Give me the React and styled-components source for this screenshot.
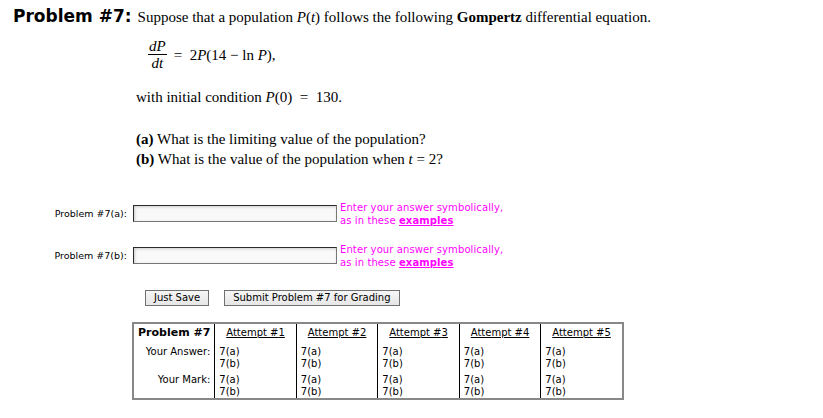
import styled, { createGlobalStyle } from "styled-components";

const GlobalStyle = createGlobalStyle`
  body {
    margin: 0;
    background: #ffffff;
    color: #000000;
    font-family: "Liberation Serif", "Times New Roman", serif;
  }
`;

const Page = styled.div`
  width: 823px;
  height: 418px;
  padding: 6px 0 0 13px;
  box-sizing: border-box;
  overflow: hidden;
`;

const HeaderRow = styled.div`
  display: flex;
  align-items: baseline;
  gap: 6px;
`;

const Heading = styled.span`
  font-family: "DejaVu Sans", Verdana, sans-serif;
  font-weight: bold;
  font-size: 17px;
  white-space: nowrap;
`;

const Body = styled.div`
  font-size: 15px;
  line-height: 18px;
`;

const Statement = styled.div`
  padding-left: 123px;
`;

const Equation = styled.div`
  display: flex;
  align-items: center;
  gap: 7px;
  margin: 13px 0 0 12px;
  font-size: 15px;
`;

const Fraction = styled.span`
  display: inline-flex;
  flex-direction: column;
  align-items: center;
  font-style: italic;
  line-height: 14px;
`;

const Numer = styled.span`
  border-bottom: 1px solid #000;
  padding: 0 1px 1px;
`;

const Denom = styled.span`
  padding-top: 1px;
`;

const I = styled.i``;

const Para = styled.p`
  margin: ${(p) => p.$top || 0}px 0 0;
`;

const Part = styled.div`
  margin-top: ${(p) => p.$top || 0}px;
`;

const AnswerRow = styled.div`
  display: flex;
  align-items: flex-start;
  margin-top: ${(p) => p.$top}px;
  font-family: "DejaVu Sans", Verdana, sans-serif;
`;

const AnswerLabel = styled.span`
  width: 114px;
  margin-top: 4px;
  text-align: right;
  font-size: 9.5px;
  line-height: 17px;
  padding-right: 6px;
  white-space: nowrap;
`;

const AnswerInput = styled.input`
  width: 204px;
  height: 17px;
  box-sizing: border-box;
  margin: 4px 0 0;
  border-style: solid;
  border-width: 1px;
  border-color: #2a2a2a #777 #777 #2a2a2a;
  background: #f9f9f9;
  box-shadow: inset 1px 1px 3px rgba(0, 0, 0, 0.18);
  outline: none;
`;

const Hint = styled.span`
  margin-left: 3px;
  color: #ff00ff;
  font-size: 10px;
  letter-spacing: 0.1px;
  line-height: 13px;
  white-space: nowrap;
`;

const HintLink = styled.span`
  font-weight: bold;
  text-decoration: underline;
`;

const ButtonRow = styled.div`
  display: flex;
  gap: 15px;
  margin: 21px 0 0 132px;
`;

const Button = styled.button`
  margin: 0;
  font-family: "DejaVu Sans", Verdana, sans-serif;
  font-size: 10px;
  height: 16px;
  padding: 0 8px;
  border: 1px solid #707070;
  background: linear-gradient(#f6f6f6, #e6e6e6);
  color: #000;
  line-height: 14px;
`;

const Results = styled.table`
  margin: 16px 0 0 119px;
  border-collapse: collapse;
  border: 2px solid #888888;
  font-family: "DejaVu Sans", Verdana, sans-serif;
  font-size: 10px;
  line-height: 12px;
`;

const HeadCell = styled.th`
  width: ${(p) => (p.$first ? 71 : 72.5)}px;
  padding: 3px 4px 3px;
  text-align: ${(p) => (p.$first ? "left" : "center")};
  font-weight: ${(p) => (p.$first ? "bold" : "normal")};
  text-decoration: ${(p) => (p.$first ? "none" : "underline")};
  font-size: ${(p) => (p.$first ? "11px" : "10px")};
  border-left: ${(p) => (p.$first ? "none" : "1px solid #000")};
  white-space: nowrap;
`;

const RowLabel = styled.td`
  text-align: right;
  vertical-align: top;
  padding: ${(p) => (p.$last ? "3px 4px 0" : "4px 4px 1px")};
  white-space: nowrap;
`;

const Cell = styled.td`
  vertical-align: top;
  border-left: 1px solid #000;
  padding: ${(p) => (p.$last ? "3px 4px 0" : "4px 4px 1px")};
`;

const attempts = [1, 2, 3, 4, 5];

export default function App() {
  return (
    <Page>
      <GlobalStyle />
      <HeaderRow>
        <Heading>Problem #7:</Heading>
        <Body>
          Suppose that a population <I>P</I>(<I>t</I>) follows the following{" "}
          <b>Gompertz</b> differential equation.
        </Body>
      </HeaderRow>
      <Body>
        <Statement>
          <Equation>
            <Fraction>
              <Numer>dP</Numer>
              <Denom>dt</Denom>
            </Fraction>
            <span>
              = &nbsp;2<I>P</I>(14 − ln <I>P</I>),
            </span>
          </Equation>
          <Para $top={18}>
            with initial condition <I>P</I>(0) &nbsp;= &nbsp;130.
          </Para>
          <Part $top={24}>
            <b>(a)</b> What is the limiting value of the population?
          </Part>
          <Part $top={2}>
            <b>(b)</b> What is the value of the population when <I>t</I> = 2?
          </Part>
        </Statement>
      </Body>
      <AnswerRow $top={33}>
        <AnswerLabel>Problem #7(a):</AnswerLabel>
        <AnswerInput />
        <Hint>
          Enter your answer symbolically,
          <br />
          as in these <HintLink>examples</HintLink>
        </Hint>
      </AnswerRow>
      <AnswerRow $top={16}>
        <AnswerLabel>Problem #7(b):</AnswerLabel>
        <AnswerInput />
        <Hint>
          Enter your answer symbolically,
          <br />
          as in these <HintLink>examples</HintLink>
        </Hint>
      </AnswerRow>
      <ButtonRow>
        <Button>Just Save</Button>
        <Button>Submit Problem #7 for Grading</Button>
      </ButtonRow>
      <Results>
        <thead>
          <tr>
            <HeadCell $first>Problem #7</HeadCell>
            {attempts.map((n) => (
              <HeadCell key={n}>Attempt #{n}</HeadCell>
            ))}
          </tr>
        </thead>
        <tbody>
          <tr>
            <RowLabel>Your Answer:</RowLabel>
            {attempts.map((n) => (
              <Cell key={n}>
                7(a)
                <br />
                7(b)
              </Cell>
            ))}
          </tr>
          <tr>
            <RowLabel $last>Your Mark:</RowLabel>
            {attempts.map((n) => (
              <Cell key={n} $last>
                7(a)
                <br />
                7(b)
              </Cell>
            ))}
          </tr>
        </tbody>
      </Results>
    </Page>
  );
}
